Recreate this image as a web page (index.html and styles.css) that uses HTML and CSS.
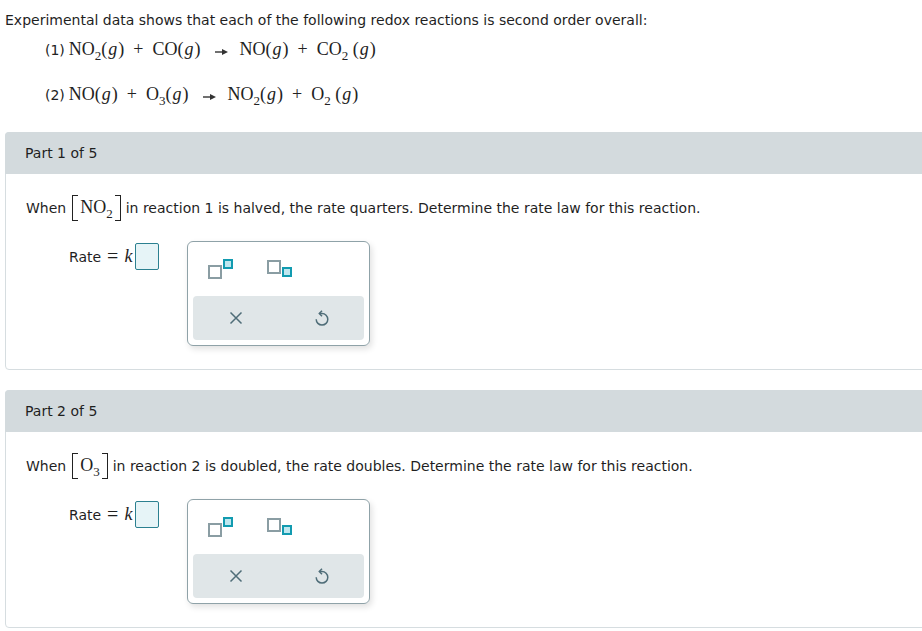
FILE: index.html
```html
<!DOCTYPE html>
<html>
<head>
<meta charset="utf-8">
<link rel="stylesheet" href="styles.css">
</head>
<body>
<div class="page">
  <p class="intro">Experimental data shows that each of the following redox reactions is second order overall:</p>
  <div class="eq eq1"><span class="num">(1)</span><span class="m">NO<sub>2</sub>(<i>g</i>)</span><span class="op">+</span><span class="m">CO(<i>g</i>)</span><span class="arrow"><svg width="14" height="8" viewBox="0 0 14 8"><path d="M0 4H9" stroke="#333" stroke-width="1.4"/><path d="M7 1L13 4L7 7Z" fill="#333"/></svg></span><span class="m">NO(<i>g</i>)</span><span class="op">+</span><span class="m">CO<sub>2</sub> (<i>g</i>)</span></div>
  <div class="eq eq2"><span class="num">(2)</span><span class="m">NO(<i>g</i>)</span><span class="op">+</span><span class="m">O<sub>3</sub>(<i>g</i>)</span><span class="arrow"><svg width="14" height="8" viewBox="0 0 14 8"><path d="M0 4H9" stroke="#333" stroke-width="1.4"/><path d="M7 1L13 4L7 7Z" fill="#333"/></svg></span><span class="m">NO<sub>2</sub>(<i>g</i>)</span><span class="op">+</span><span class="m">O<sub>2</sub> (<i>g</i>)</span></div>

  <section class="part part1">
    <div class="part-head">Part 1 of 5</div>
    <div class="part-body">
      <p class="question">When <span class="conc"><span class="br l"></span><span class="m">NO<sub>2</sub></span><span class="br r"></span></span> in reaction 1 is halved, the rate quarters. Determine the rate law for this reaction.</p>
      <div class="answer">
        <div class="rate">Rate <span class="eqs">=</span> <i class="k">k</i><span class="box"></span></div>
        <div class="palette">
          <div class="tools">
            <span class="sup-icon"><span class="big"></span><span class="small"></span></span>
            <span class="sub-icon"><span class="big"></span><span class="small"></span></span>
          </div>
          <div class="actions">
            <span class="act"><svg width="14" height="14" viewBox="0 0 14 14"><path d="M1.5 1.5L12.5 12.5M12.5 1.5L1.5 12.5" stroke="#4f6d78" stroke-width="1.5"/></svg></span>
            <span class="act"><svg width="15" height="18" viewBox="0 0 15 18"><path d="M5.5 4.5H8A5.8 5.8 0 1 1 2.2 10.3" fill="none" stroke="#4f6d78" stroke-width="1.5"/><path d="M8 1.8L5.3 4.5L8 7.2" fill="none" stroke="#4f6d78" stroke-width="1.5"/></svg></span>
          </div>
        </div>
      </div>
    </div>
  </section>

  <section class="part part2">
    <div class="part-head">Part 2 of 5</div>
    <div class="part-body">
      <p class="question">When <span class="conc"><span class="br l"></span><span class="m">O<sub>3</sub></span><span class="br r"></span></span> in reaction 2 is doubled, the rate doubles. Determine the rate law for this reaction.</p>
      <div class="answer">
        <div class="rate">Rate <span class="eqs">=</span> <i class="k">k</i><span class="box"></span></div>
        <div class="palette">
          <div class="tools">
            <span class="sup-icon"><span class="big"></span><span class="small"></span></span>
            <span class="sub-icon"><span class="big"></span><span class="small"></span></span>
          </div>
          <div class="actions">
            <span class="act"><svg width="14" height="14" viewBox="0 0 14 14"><path d="M1.5 1.5L12.5 12.5M12.5 1.5L1.5 12.5" stroke="#4f6d78" stroke-width="1.5"/></svg></span>
            <span class="act"><svg width="15" height="18" viewBox="0 0 15 18"><path d="M5.5 4.5H8A5.8 5.8 0 1 1 2.2 10.3" fill="none" stroke="#4f6d78" stroke-width="1.5"/><path d="M8 1.8L5.3 4.5L8 7.2" fill="none" stroke="#4f6d78" stroke-width="1.5"/></svg></span>
          </div>
        </div>
      </div>
    </div>
  </section>
</div>
</body>
</html>
```

FILE: styles.css
```css
html, body {
  margin: 0;
  padding: 0;
  overflow: hidden;
  background: #fff;
}
body {
  font-family: "DejaVu Sans", Verdana, sans-serif;
  font-size: 14px;
  color: #1f1f1f;
}
.page {
  padding-top: 11px;
}
.intro {
  margin: 0 0 0 5px;
  line-height: 18px;
}
.eq {
  display: flex;
  align-items: baseline;
  margin-left: 45px;
  height: 24px;
  font-family: "Liberation Serif", "Times New Roman", serif;
  font-size: 18px;
  color: #222;
}
.eq1 { margin-top: 10px; }
.eq2 { margin-top: 21px; }
.eq .num {
  font-family: "DejaVu Sans", Verdana, sans-serif;
  font-size: 14px;
  margin-right: 4px;
}
.m sub {
  font-size: 13px;
  vertical-align: -5px;
  line-height: 0;
}
.m i {
  padding: 0 1px;
}
.op {
  margin: 0 9px;
}
.arrow {
  margin: 0 11px 0 14px;
  align-self: center;
  display: flex;
  padding-top: 2px;
}
.part {
  margin-left: 5px;
  margin-right: -20px;
  border: 1px solid #d6dde0;
  border-radius: 4px;
}
.part1 { margin-top: 24px; }
.part2 { margin-top: 20px; }
.part-head {
  background: #d3dadd;
  height: 42px;
  line-height: 43px;
  padding-left: 20px;
  margin: -1px -1px 0 -1px;
  border-radius: 4px 4px 0 0;
}
.part-body {
  padding: 21px 20px 23px 20px;
}
.question {
  margin: 0;
  line-height: 22px;
  display: flex;
  align-items: center;
}
.conc {
  display: inline-flex;
  align-items: center;
  margin: 0 5px 0 6px;
  font-family: "Liberation Serif", "Times New Roman", serif;
  font-size: 18px;
  height: 26px;
}
.conc .m {
  padding: 0 2px 2px 2px;
}
.br {
  width: 5px;
  height: 24px;
  border-top: 1.5px solid #222;
  border-bottom: 1.5px solid #222;
}
.br.l { border-left: 1.5px solid #222; }
.br.r { border-right: 1.5px solid #222; }
.answer {
  display: flex;
  align-items: flex-start;
  margin-top: 20px;
  padding-left: 43px;
}
.rate {
  display: flex;
  align-items: center;
  height: 27px;
  margin-top: 2px;
}
.eqs {
  font-family: "Liberation Serif", serif;
  font-size: 20px;
  margin: 0 6px 0 6px;
}
.k {
  font-family: "Liberation Serif", serif;
  font-size: 18px;
  margin-right: 3px;
}
.box {
  width: 22px;
  height: 25px;
  border: 1px solid #2b8090;
  background: #e6f4f7;
  border-radius: 2px;
}
.palette {
  margin-left: 28px;
  border: 1px solid #8fa2a8;
  border-radius: 6px;
  box-shadow: 2px 3px 6px rgba(0, 0, 0, 0.12);
  display: flex;
  flex-direction: column;
  padding: 0 5px 5px 5px;
  width: 171px;
  height: 98px;
}
.tools {
  height: 54px;
  display: flex;
  align-items: flex-start;
}
.sup-icon, .sub-icon {
  position: relative;
  display: block;
  width: 26px;
  height: 22px;
}
.sup-icon { margin: 16px 0 0 15px; }
.sub-icon { margin: 16px 0 0 33px; }
.big, .small {
  position: absolute;
  box-sizing: border-box;
}
.big {
  width: 14px;
  height: 14px;
  border: 2px solid #8a9da3;
  background: #fff;
}
.small {
  width: 10px;
  height: 10px;
  border: 2px solid #129bb0;
  background: #bfe7ef;
}
.sup-icon .big { left: 0; top: 7px; }
.sup-icon .small { left: 15px; top: 1px; }
.sub-icon .big { left: 0; top: 2px; }
.sub-icon .small { left: 15px; top: 9px; }
.actions {
  flex: 1;
  background: #e0e6e8;
  border-radius: 4px;
  display: flex;
  align-items: center;
}
.act {
  flex: 1;
  display: flex;
  justify-content: center;
  align-items: center;
}
```
